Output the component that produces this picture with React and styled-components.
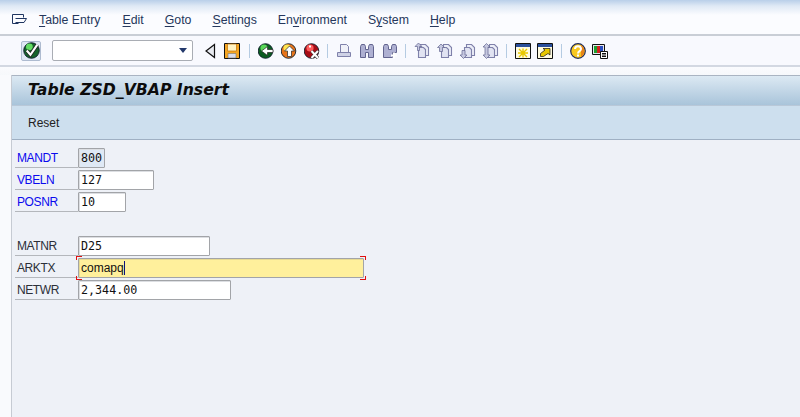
import React from 'react';
import styled, { createGlobalStyle } from 'styled-components';

const GlobalStyle = createGlobalStyle`
    html, body {
        margin: 0;
        padding: 0;
        height: 100%;
        overflow: hidden;
        background: #eef1f7;
    }
    #root {
        height: 100%;
    }
`;

const Page = styled.div`
    width: 800px;
    height: 417px;
    display: flex;
    flex-direction: column;
    font-family: "Liberation Sans", Arial, sans-serif;
    overflow: hidden;
`;

const MenuBar = styled.div`
    height: 36px;
    box-sizing: border-box;
    border-bottom: 2px solid #c9ced6;
    background: linear-gradient(#b9cfe9 0, #dfe9f5 6px, #fbfcff 15px, #fbfcff 100%);
    display: flex;
    align-items: center;
    padding: 6px 0 0 12px;
`;

const MenuItems = styled.div`
    display: flex;
    gap: 21px;
    margin-left: 12px;
    font-size: 12.3px;
    color: #25375c;
`;

const MenuItem = styled.span`
    u {
        text-underline-offset: 2px;
    }
    &:nth-child(2) {
        margin-left: 1px;
    }
`;

const Toolbar = styled.div`
    height: 31px;
    box-sizing: border-box;
    border-bottom: 2px solid #d3d8e2;
    background: #f8f9fe;
    display: flex;
    align-items: center;
    padding-left: 21px;
`;

const OkButton = styled.div`
    width: 20px;
    height: 20px;
    box-sizing: border-box;
    border: 1px solid #aebbd0;
    border-radius: 2px;
    background: #dfe7f3;
    display: flex;
    align-items: center;
    justify-content: center;
    margin-right: 11px;
`;

const Combo = styled.div`
    width: 141px;
    height: 21px;
    box-sizing: border-box;
    border: 1px solid #a9adb4;
    border-radius: 2px;
    background: #fff;
    display: flex;
    align-items: center;
    justify-content: flex-end;
    padding-right: 5px;
    margin-right: 9px;
`;

const ComboArrow = styled.div`
    width: 0;
    height: 0;
    border-left: 4px solid transparent;
    border-right: 4px solid transparent;
    border-top: 5px solid #23386b;
`;

const ToolIcon = styled.svg`
    width: 16px;
    height: 16px;
    flex: none;
    margin-left: ${(p) => p.$gap}px;
    display: block;
`;

const Divider = styled.div`
    width: 1px;
    height: 14px;
    flex: none;
    margin-left: ${(p) => p.$gap}px;
    background: #b5cbe2;
`;

const Body = styled.div`
    flex: 1;
    display: flex;
    flex-direction: column;
    background: #f9fafd;
`;

const Spacer = styled.div`
    height: 8px;
    background: linear-gradient(#fafbfe, #f6f8fb);
`;

const Frame = styled.div`
    flex: 1;
    margin-left: 11px;
    border-left: 1px solid #c6cbd3;
    background: #eef1f7;
`;

const Header = styled.div`
    box-sizing: border-box;
    border-top: 1px solid #aab4c2;
    border-bottom: 1px solid #9fb0c3;
    background: #cddfee;
`;

const TitleBar = styled.div`
    height: 30px;
    box-sizing: border-box;
    border-bottom: 1px solid #b9c8d8;
    background: linear-gradient(#dce9f3, #a9c4da);
    padding: 0 0 2px 16px;
    display: flex;
    align-items: center;
`;

const Title = styled.h1`
    margin: 0;
    font-family: "DejaVu Sans", Verdana, sans-serif;
    font-size: 15.7px;
    font-weight: 700;
    font-style: italic;
    color: #0c0c0c;
`;

const ActionBar = styled.div`
    height: 33px;
    display: flex;
    align-items: center;
    padding-left: 16px;
    font-size: 12px;
    color: #222;
`;

const Form = styled.div`
    display: flex;
    flex-direction: column;
    padding: 8px 0 0 3px;
`;

const Row = styled.div`
    height: 22px;
    display: flex;
    align-items: flex-start;
`;

const Label = styled.div`
    width: 63px;
    height: 20px;
    box-sizing: border-box;
    border-bottom: 1px solid #b4b7bc;
    padding: 3px 0 0 2px;
    font-size: 12px;
    letter-spacing: -0.4px;
    line-height: 15px;
    color: ${(p) => (p.$key ? '#0a0aee' : '#2b2f38')};
`;

const Field = styled.div`
    width: ${(p) => p.$width}px;
    height: 20px;
    box-sizing: border-box;
    position: relative;
    border: 1px solid #a2a4a8;
    border-radius: 1px;
    box-shadow: inset 1px 1px 0 ${(p) => (p.$focus ? '#e8db92' : '#dcdee2')};
    background: ${(p) => (p.$readOnly ? '#dfe9f5' : p.$focus ? '#fff09c' : '#fff')};
    padding-left: 2px;
    font-family: ${(p) => (p.$focus ? '"Liberation Sans", Arial, sans-serif' : '"DejaVu Sans Mono", monospace')};
    font-size: ${(p) => (p.$focus ? 12 : 11.7)}px;
    line-height: 18px;
    color: #111;
    white-space: nowrap;
`;

const Caret = styled.span`
    display: inline-block;
    width: 1px;
    height: 14px;
    background: #10107a;
    vertical-align: -3px;
`;

const Corner = styled.span`
    position: absolute;
    width: 5px;
    height: 3px;
    border: 0 solid #e01010;
    ${(p) => (p.$top ? 'top: -3px; border-top-width: 1px;' : 'bottom: -3px; border-bottom-width: 1px;')}
    ${(p) => (p.$left ? 'left: -3px; border-left-width: 1px;' : 'right: -3px; border-right-width: 1px;')}
`;

function Icon({ gap = 0, children }) {
    return (
        <ToolIcon $gap={gap} viewBox="0 0 16 16">
            {children}
        </ToolIcon>
    );
}

const Ball = ({ c1, c2 }) => (
    <>
        <circle cx="7.5" cy="8" r="7.3" fill={c2} stroke="#10202c" strokeWidth="0.9" />
        <circle cx="6" cy="5" r="3.6" fill={c1} />
    </>
);

const Pages = () => (
    <>
        <path d="M6.5 1.5h5l3 3v8h-8z" fill="#eceef8" stroke="#7f81aa" strokeWidth="1.1" />
        <path d="M4.5 4.5h5l2 2v8h-7z" fill="#e1e3f2" stroke="#7f81aa" strokeWidth="1.1" />
    </>
);

function App() {
    return (
        <Page>
            <GlobalStyle />
            <MenuBar>
                <svg width="15" height="12" viewBox="0 0 15 12">
                    <path d="M.5.5h11v3M.5.5v9h6M3.5 4.5h11l-2.500 4h-8.500" fill="none" stroke="#1f3560" strokeWidth="1" />
                </svg>
                <MenuItems>
                    <MenuItem><u>T</u>able Entry</MenuItem>
                    <MenuItem><u>E</u>dit</MenuItem>
                    <MenuItem><u>G</u>oto</MenuItem>
                    <MenuItem><u>S</u>ettings</MenuItem>
                    <MenuItem>En<u>v</u>ironment</MenuItem>
                    <MenuItem>S<u>y</u>stem</MenuItem>
                    <MenuItem><u>H</u>elp</MenuItem>
                </MenuItems>
            </MenuBar>
            <Toolbar>
                <OkButton>
                    <svg width="17" height="17" viewBox="0 0 16 16">
                        <circle cx="8" cy="8" r="7.3" fill="#15622a" stroke="#10202c" strokeWidth="0.9" />
                        <circle cx="6" cy="4.5" r="3.2" fill="#62dc62" />
                        <path d="M3.500 8l3.500 4 6.500-9.500" fill="none" stroke="#222" strokeWidth="3.4" />
                        <path d="M3.500 8l3.500 4 6.500-9.500" fill="none" stroke="#fff" strokeWidth="2" />
                    </svg>
                </OkButton>
                <Combo><ComboArrow /></Combo>
                <Icon>
                    <path d="M12.500 1.500v13L4 8z" fill="#e8eaf0" stroke="#111" strokeWidth="1.200" />
                </Icon>
                <Icon gap={6}>
                    <path d="M.5 .5h15v15H.5z" fill="#f5a623" stroke="#111" strokeWidth="1" />
                    <path d="M3.500 1h9v7h-9z" fill="#fff3c4" stroke="#c67a10" strokeWidth="0.8" />
                    <path d="M4 10.500h8V15H4z" fill="#d9dcec" stroke="#777" strokeWidth="0.6" />
                </Icon>
                <Divider $gap={9} />
                <Icon gap={8}>
                    <Ball c1="#58d858" c2="#0b5c20" />
                    <path d="M15 6.500H9.500V3.500L3.500 8l6 4.500v-3H15z" fill="#fff" stroke="#222" strokeWidth="0.7" />
                </Icon>
                <Icon gap={7}>
                    <Ball c1="#ffe650" c2="#e8741a" />
                    <path d="M8.500 3l5 5h-3v5.500h-4V8h-3z" fill="#fff" stroke="#222" strokeWidth="0.7" />
                </Icon>
                <Icon gap={7}>
                    <Ball c1="#ff5c5c" c2="#a80d16" />
                    <path d="M7.500 8l6.500 7M14 8l-6.500 7" stroke="#333" strokeWidth="3.200" />
                    <path d="M7.500 8l6.500 7M14 8l-6.500 7" stroke="#fff" strokeWidth="2" />
                    <path d="M5 2.500h2v2H5z" fill="#fff" />
                </Icon>
                <Divider $gap={7} />
                <Icon gap={8}>
                    <path d="M4.500 1.500h6l2 2v6h-8z" fill="#f0f1f8" stroke="#7f81aa" />
                    <path d="M1.500 9.500h13v4h-13z" fill="#cfd2e6" stroke="#7f81aa" />
                </Icon>
                <Icon gap={7}>
                    <path d="M1.500 3.500l1-2h3l1 2v3h3v-3l1-2h3l1 2v11h-5v-5h-3v5h-5z" fill="#aeb0d2" stroke="#62648f" />
                </Icon>
                <Icon gap={7}>
                    <path d="M1.500 3.500l1-2h3l1 2v3h3v-3l1-2h3l1 2v6h-4v5h-9z" fill="#aeb0d2" stroke="#62648f" />
                    <path d="M12 9.500v6M9 12.500h6" stroke="#fff" strokeWidth="2.200" />
                </Icon>
                <Divider $gap={7} />
                <Icon gap={8}>
                    <Pages />
                    <path d="M4.500 0l3.500 3.500H5.500v4h-2v-4H1z" fill="#c6c8e0" stroke="#62648f" strokeWidth="0.7" />
                </Icon>
                <Icon gap={7}>
                    <Pages />
                    <path d="M4 1l3.500 3.500H5.500v4h-3v-4H.5z" fill="#c6c8e0" stroke="#62648f" strokeWidth="0.7" />
                </Icon>
                <Icon gap={7}>
                    <Pages />
                    <path d="M3.500 15.500L7 12H5V7.500H2V12H0z" fill="#c6c8e0" stroke="#62648f" strokeWidth="0.7" />
                </Icon>
                <Icon gap={7}>
                    <Pages />
                    <path d="M3.500 .5L7 4H5v8h2l-3.500 3.500L0 12h2V4H0z" fill="#c6c8e0" stroke="#62648f" strokeWidth="0.7" />
                </Icon>
                <Divider $gap={7} />
                <Icon gap={8}>
                    <path d="M.5 .5h15v15H.5z" fill="#fffbe0" stroke="#111" />
                    <path d="M1 1h14v3H1z" fill="#2a4f9c" />
                    <path d="M8 5.500v9M4 6l8 8M12 6l-8 8M3 10h10" stroke="#e8c800" strokeWidth="1.400" />
                </Icon>
                <Icon gap={6}>
                    <path d="M.5 .5h15v15H.5z" fill="#fffbe0" stroke="#111" />
                    <path d="M1 1h14v3H1z" fill="#2a4f9c" />
                    <path d="M3.500 13.500v-3l4.500-3.500-2-1.500h7v6.500l-2-1.500-4.500 3z" fill="#e8c800" stroke="#111" strokeWidth="0.7" />
                </Icon>
                <Divider $gap={8} />
                <Icon gap={8}>
                    <circle cx="8" cy="8" r="7.300" fill="#f8c820" stroke="#1d2a5c" strokeWidth="1.200" />
                    <path d="M11 2a7 7 0 0 1 0 12z" fill="#e8841a" />
                    <path d="M5 6c0-3.800 6-3.800 6 0 0 2.300-3 2-3 4.500" fill="none" stroke="#fff" strokeWidth="2" />
                    <path d="M7 11.500h2v2H7z" fill="#fff" />
                </Icon>
                <Icon gap={6}>
                    <path d="M.5 1.500h12v10H.5z" fill="#e6e6ee" stroke="#111" />
                    <path d="M2 3h3v7H2z" fill="#1fa02e" />
                    <path d="M5 3h3v7H5z" fill="#d42020" />
                    <path d="M8 3h3v7H8z" fill="#2a4fc0" />
                    <path d="M8.500 8.500h7v7h-7z" fill="#fff" stroke="#111" />
                    <path d="M10 10.500h4M10 12h4M10 13.500h4" stroke="#111" />
                </Icon>
            </Toolbar>
            <Body>
                <Spacer />
                <Frame>
                    <Header>
                        <TitleBar><Title>Table ZSD_VBAP Insert</Title></TitleBar>
                        <ActionBar>Reset</ActionBar>
                    </Header>
                    <Form>
                        <Row><Label $key>MANDT</Label><Field $width={27} $readOnly>800</Field></Row>
                        <Row><Label $key>VBELN</Label><Field $width={76}>127</Field></Row>
                        <Row><Label $key>POSNR</Label><Field $width={48}>10</Field></Row>
                        <Row />
                        <Row><Label>MATNR</Label><Field $width={132}>D25</Field></Row>
                        <Row>
                            <Label>ARKTX</Label>
                            <Field $width={286} $focus>
                                comapq<Caret />
                                <Corner $top $left />
                                <Corner $left />
                                <Corner $top />
                                <Corner />
                            </Field>
                        </Row>
                        <Row><Label>NETWR</Label><Field $width={153}>2,344.00</Field></Row>
                    </Form>
                </Frame>
            </Body>
        </Page>
    );
}

export default App;
